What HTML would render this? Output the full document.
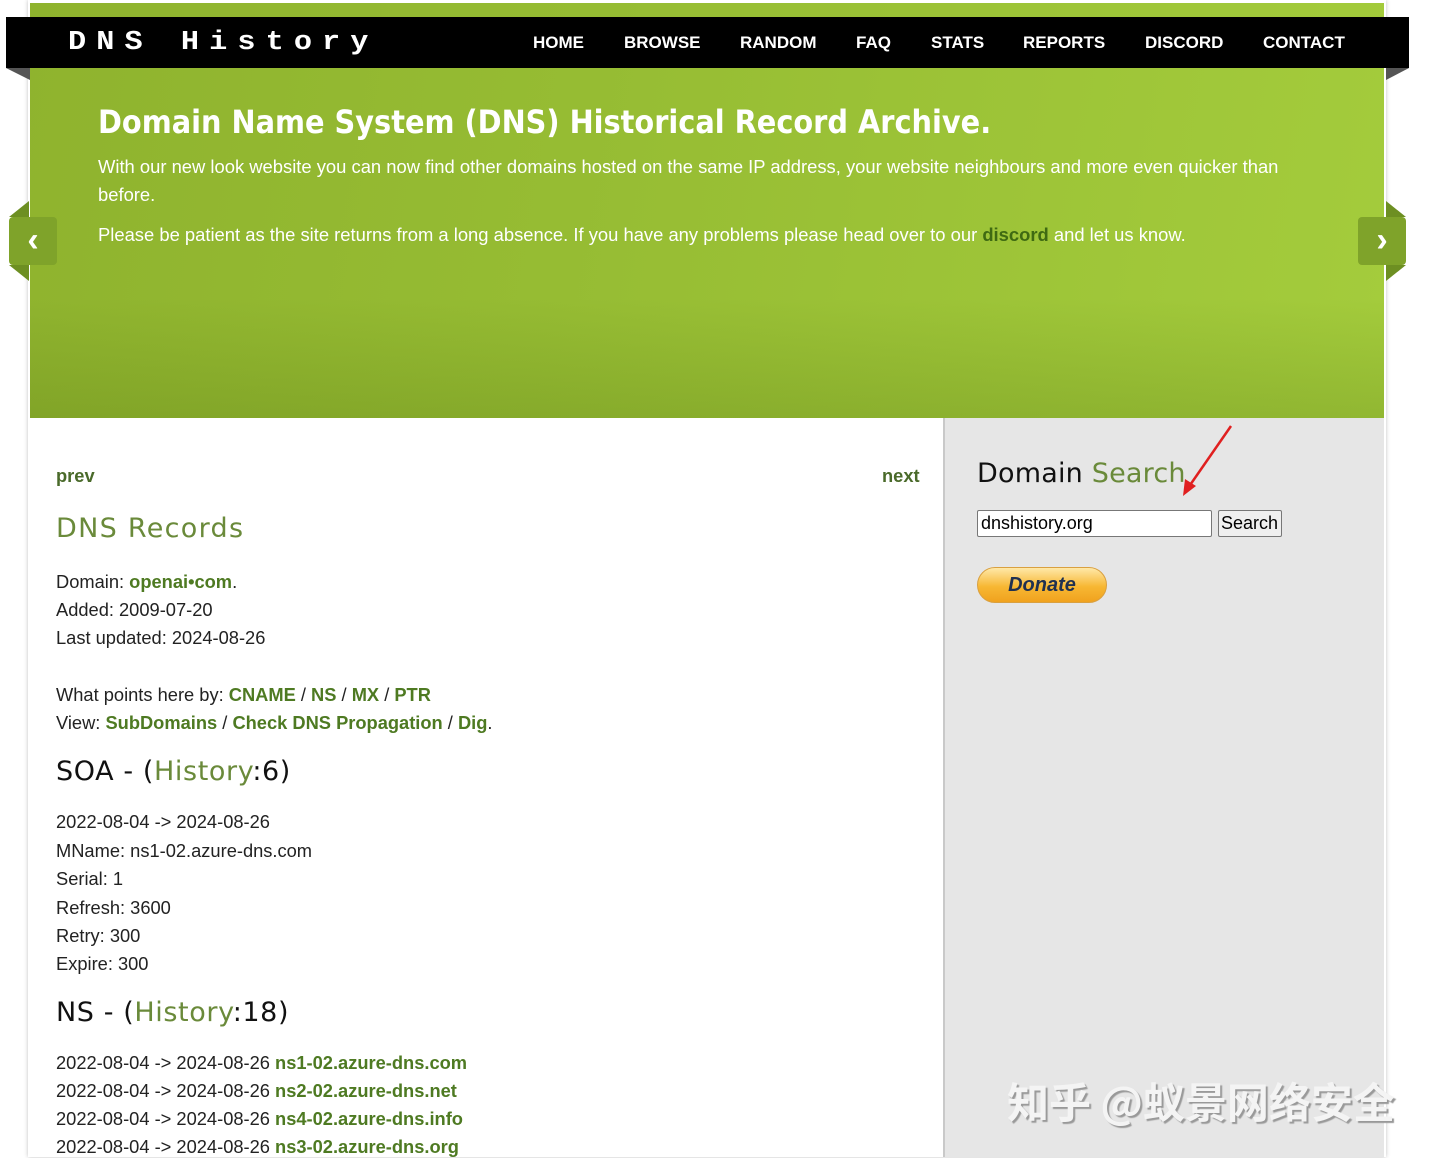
<!DOCTYPE html>
<html><head><meta charset="utf-8"><style>
*{margin:0;padding:0;box-sizing:border-box}
body{width:1440px;height:1157px;overflow:hidden;background:#fff;font-family:"Liberation Sans",Arial,sans-serif;position:relative}
.wrap{position:absolute;left:28px;top:0;width:1358px;height:1157px;background:#fff;box-shadow:0 0 4px rgba(0,0,0,.25)}
.hero{position:absolute;left:30px;top:3px;width:1354px;height:415px;background:linear-gradient(100deg,#8fb32e 0%,#96bc33 40%,#a4cc3c 100%)}
.hero:after{content:"";position:absolute;left:0;right:0;bottom:0;height:120px;background:linear-gradient(180deg,rgba(0,0,0,0),rgba(70,100,10,.2))}
.nav{position:absolute;left:6px;top:17px;width:1403px;height:51px;background:#000}
.logo{position:absolute;left:62px;top:11px;color:#fff;font-family:"Liberation Mono",monospace;font-weight:bold;font-size:27px;letter-spacing:9px;transform:scaleX(1.12);transform-origin:left}
.menu{position:absolute;top:16px;font-weight:bold;font-size:17px;color:#fff}
.fold{position:absolute;width:0;height:0}
h1{position:absolute;left:98px;top:103px;font-family:"DejaVu Sans Condensed","DejaVu Sans",sans-serif;font-weight:bold;font-size:32px;color:#fff;white-space:nowrap}
.ht{position:absolute;left:98px;color:#fff;font-size:18.4px;line-height:28px;width:1200px}
.arrow{position:absolute;top:217px;width:48px;height:48px;background:#7fa32a;border-radius:4px;color:#fff;font-size:34px;font-weight:bold;text-align:center;line-height:46px}
.side{position:absolute;left:943px;top:418px;width:441px;height:739px;background:#e6e6e6;border-left:2px solid #c9c9c9}
.g{color:#4e7a22;font-weight:bold;text-decoration:none}
.t{position:absolute;left:56px;font-size:18.3px;color:#222}
.h2{position:absolute;left:56px;font-family:"DejaVu Sans",sans-serif;font-size:27px;color:#111;letter-spacing:.6px}
.h2 span{color:#6a8a3a}
</style></head><body>
<div class="wrap"></div>
<div class="hero"></div>
<div class="fold" style="left:6px;top:68px;border-top:12px solid #555;border-left:24px solid transparent"></div>
<div class="fold" style="left:1386px;top:68px;border-top:12px solid #555;border-right:23px solid transparent"></div>
<div class="nav">
<div class="logo">DNS History</div>
<div class="menu" style="left:527px">HOME</div>
<div class="menu" style="left:618px">BROWSE</div>
<div class="menu" style="left:734px">RANDOM</div>
<div class="menu" style="left:850px">FAQ</div>
<div class="menu" style="left:925px">STATS</div>
<div class="menu" style="left:1017px">REPORTS</div>
<div class="menu" style="left:1139px">DISCORD</div>
<div class="menu" style="left:1257px">CONTACT</div>
</div>
<h1>Domain Name System (DNS) Historical Record Archive.</h1>
<div class="ht" style="top:153px;width:1210px">With our new look website you can now find other domains hosted on the same IP address, your website neighbours and more even quicker than before.</div>
<div class="ht" style="top:221px">Please be patient as the site returns from a long absence. If you have any problems please head over to our <span style="color:#3f6a12;font-weight:bold">discord</span> and let us know.</div>
<div class="fold" style="left:9px;top:201px;border-bottom:16px solid #6d8f22;border-left:20px solid transparent"></div>
<div class="fold" style="left:9px;top:265px;border-top:16px solid #6d8f22;border-left:20px solid transparent"></div>
<div class="arrow" style="left:9px">‹</div>
<div class="fold" style="left:1386px;top:201px;border-bottom:16px solid #6d8f22;border-right:20px solid transparent"></div>
<div class="fold" style="left:1386px;top:265px;border-top:16px solid #6d8f22;border-right:20px solid transparent"></div>
<div class="arrow" style="left:1358px">›</div>

<div class="side"></div>
<div style="position:absolute;left:977px;top:458px;font-family:'DejaVu Sans',sans-serif;font-size:27px;color:#111;letter-spacing:.2px">Domain <span style="color:#6a8a3a">Search</span></div>
<svg style="position:absolute;left:1178px;top:422px" width="60" height="78"><line x1="53" y1="4" x2="10" y2="66" stroke="#e02020" stroke-width="2.5"/><polygon points="5,74 7,57 18,64" fill="#e02020"/></svg>
<div style="position:absolute;left:977px;top:510px;width:235px;height:27px;background:#fff;border:1px solid #777;border-radius:2px;font-size:18px;padding:2px 3px">dnshistory.org</div>
<div style="position:absolute;left:1218px;top:510px;width:64px;height:27px;background:#efefef;border:1px solid #777;border-radius:2px;font-size:18px;padding:2px 2px">Search</div>
<div style="position:absolute;left:977px;top:567px;width:130px;height:36px;border-radius:18px;background:linear-gradient(#ffe8a8,#f7b733 55%,#f0a21e);border:1px solid #d9a040;text-align:center;font-style:italic;font-weight:bold;font-size:20px;color:#1f3050;line-height:34px">Donate</div>
<div style="position:absolute;left:1007px;top:1070px;font-family:'Noto Sans CJK SC',sans-serif;font-size:42px;font-weight:bold;color:#f4f4f4;text-shadow:2px 2px 1px #999;white-space:nowrap">知乎 @蚁景网络安全</div>

<div class="t g" style="top:465px;color:#4a6a2a">prev</div>
<div class="t g" style="top:465px;left:882px;color:#4a6a2a">next</div>
<div class="h2" style="top:513px;color:#6a8a3a;letter-spacing:1.3px">DNS Records</div>
<div class="t" style="top:571px">Domain: <span class="g">openai•com</span>.</div>
<div class="t" style="top:599px">Added: 2009-07-20</div>
<div class="t" style="top:627px">Last updated: 2024-08-26</div>
<div class="t" style="top:684px">What points here by: <span class="g">CNAME</span> / <span class="g">NS</span> / <span class="g">MX</span> / <span class="g">PTR</span></div>
<div class="t" style="top:712px">View: <span class="g">SubDomains</span> / <span class="g">Check DNS Propagation</span> / <span class="g">Dig</span>.</div>
<div class="h2" style="top:756px">SOA - (<span>History</span>:6)</div>
<div class="t" style="top:811px">2022-08-04 -&gt; 2024-08-26</div>
<div class="t" style="top:840px">MName: ns1-02.azure-dns.com</div>
<div class="t" style="top:868px">Serial: 1</div>
<div class="t" style="top:897px">Refresh: 3600</div>
<div class="t" style="top:925px">Retry: 300</div>
<div class="t" style="top:953px">Expire: 300</div>
<div class="h2" style="top:997px">NS - (<span>History</span>:18)</div>
<div class="t" style="top:1052px">2022-08-04 -&gt; 2024-08-26 <span class="g">ns1-02.azure-dns.com</span></div>
<div class="t" style="top:1080px">2022-08-04 -&gt; 2024-08-26 <span class="g">ns2-02.azure-dns.net</span></div>
<div class="t" style="top:1108px">2022-08-04 -&gt; 2024-08-26 <span class="g">ns4-02.azure-dns.info</span></div>
<div class="t" style="top:1136px">2022-08-04 -&gt; 2024-08-26 <span class="g">ns3-02.azure-dns.org</span></div>
</body></html>
